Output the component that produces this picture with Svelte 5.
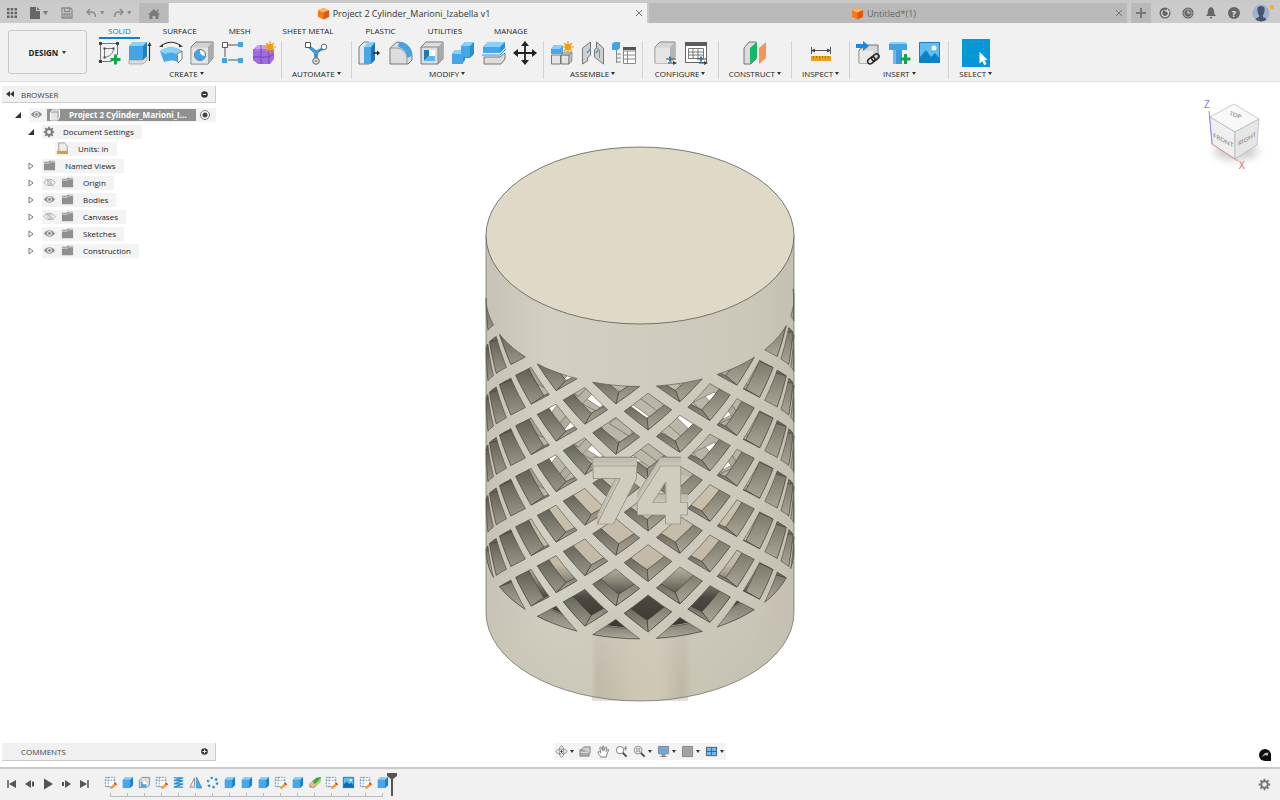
<script>
  // ---- Toolbar data -------------------------------------------------------
  const ribbonTabs = ['SOLID', 'SURFACE', 'MESH', 'SHEET METAL', 'PLASTIC', 'UTILITIES', 'MANAGE'];
  const groups = [
    { label: 'CREATE', icons: ['sketch', 'extrude', 'revolve', 'hole', 'pattern', 'form'] },
    { label: 'AUTOMATE', icons: ['automate'] },
    { label: 'MODIFY', icons: ['presspull', 'fillet', 'shell', 'combine', 'split', 'move'] },
    { label: 'ASSEMBLE', icons: ['component', 'joint', 'bom'] },
    { label: 'CONFIGURE', icons: ['configure', 'table'] },
    { label: 'CONSTRUCT', icons: ['plane'] },
    { label: 'INSPECT', icons: ['measure'] },
    { label: 'INSERT', icons: ['derive', 'fastener', 'image'] },
    { label: 'SELECT', icons: ['select'] }
  ];
  const tree = [
    { label: 'Named Views', kind: 'views' },
    { label: 'Origin', eye: 'off' },
    { label: 'Bodies', eye: 'on' },
    { label: 'Canvases', eye: 'off' },
    { label: 'Sketches', eye: 'on' },
    { label: 'Construction', eye: 'on' }
  ];
  const timeline = ['tSketch', 'tExtrude', 'tShell', 'tSketch', 'tCoil', 'tMirror', 'tPattern', 'tExtrude', 'tExtrude', 'tExtrude', 'tSketch', 'tExtrude', 'tPaint', 'tSketch', 'tImage', 'tSketch', 'tExtrude'];
  const transport = [
    ['Go to start', 'start'], ['Step back', 'back'], ['Play', 'play'], ['Step forward', 'forward'], ['Go to end', 'end']
  ];
  const navTools = [
    ['Orbit', 'orbit', true], ['Look at', 'look', false], ['Pan', 'hand', false], ['Zoom', 'zoom', false],
    ['Fit', 'fit', true], ['Display settings', 'monitor', true], ['Grid and snaps', 'square', true], ['Viewports', 'grid', true]
  ];

  const art = {
    sketch: '<path d="M2 2.500h19M3.500 1v21M1.500 20.500h13M20.500 2v12" stroke="#777" fill="none"/><path d="M2 1h3v3H2zM19 1h3v3h-3zM2 19h3v3H2z" fill="#444"/><path d="M7.500 7.500h9c0 5-4 8-9 9z" stroke="#777" fill="none"/><path d="M6.500 6.500h2v2h-2zM15.500 6.500h2v2h-2zM6.500 15.500h2v2h-2z" fill="#444"/><path d="M18.500 13.500v10M13.500 18.500h10" stroke="#16a34a" stroke-width="3"/>',
    extrude: '<path d="M1 5l4-4h14v18l-4 4H1z" fill="#9b9b9b"/><path d="M1 5h14v14H1z" fill="#42a5e6"/><path d="M1 5l4-4h14l-4 4z" fill="#8bd0f7"/><path d="M15 5l4-4v14l-4 4z" fill="#1e80c4"/><path d="M1 19h14l4-4v4l-4 4H1z" fill="#ddd" stroke="#888" stroke-width=".6"/><path d="M21.500 20V4" stroke="#333" stroke-width="1.200"/><path d="M21.500 1l2 4h-4z" fill="#333"/>',
    revolve: '<path d="M2 5c6-5 14-5 20 0" stroke="#333" stroke-width="1.200" fill="none"/><path d="M0 6l4-3v3zM24 6l-4-3v3z" fill="#333"/><path d="M1 10c7-5 15-5 22 0l-4 11c-4-2-9-2-14 0z" fill="#49a8e8"/><path d="M1 10c7-5 15-5 22 0l-5 3c-4-2-8-2-12 0z" fill="#8bd0f7"/><path d="M18 13l5-3v8l-4 4z" fill="#fff" stroke="#777"/>',
    hole: '<path d="M1 6l5-5h17v16l-5 6H1z" fill="#d0d0d0" stroke="#777"/><path d="M1.500 6.500H18v16H1.500z" fill="#e3e3e3"/><path d="M18 6l5-5v16l-5 6z" fill="#aaa"/><circle cx="10" cy="14" r="5.500" fill="#fff" stroke="#666"/><path d="M10 8.500a5.500 5.500 0 1 0 5.500 6c-3 1-6-1-5.500-6z" fill="#40a4e6"/>',
    pattern: '<path d="M7 4h10M7 19h10M4 7v9" stroke="#555" fill="none"/><path d="M1.500 1.500h5v5h-5z" fill="#fff" stroke="#555"/><path d="M17 1h5v5h-5zM1 17h5v5H1zM17 17h5v5h-5z" fill="#40a4e6"/>',
    form: '<path d="M6 4h11l5 4v10l-4 5H6l-5-4V9z" fill="#a06be0"/><path d="M6 4h11l2 3-3 3H1.500z" fill="#c9a3f5"/><path d="M1 9h16v14M9 4v19M1 16h16l5-3" stroke="#6d3bb0" stroke-width=".8" fill="none"/><circle cx="18" cy="6" r="3.200" fill="#f59e0b"/><path d="M18 0v12M12 6h12M14 2l8 8M22 2l-8 8" stroke="#f59e0b" stroke-width="1.200"/>',
    automate: '<path d="M4 5l8 6 8-4M12 11v8" stroke="#3d9bdc" stroke-width="3" fill="none"/><path d="M6 8c5 3 5 6 5 10M18 8c-5 3-5 6-5 10" stroke="#2c7eb8" fill="none"/><path d="M1.500 1.500h5v5h-5z" fill="#fff" stroke="#555"/><circle cx="20" cy="6" r="2.800" fill="#fff" stroke="#666"/><circle cx="12" cy="20" r="3.300" fill="#ddd" stroke="#666"/><circle cx="12" cy="20" r="1" fill="#777"/>',
    presspull: '<path d="M1 6l5-5h5v22H1z" fill="#e8e8e8" stroke="#777"/><path d="M6 6l4-5h7l-4 5z" fill="#8bd0f7"/><path d="M6 6h7v17H6z" fill="#46a6e7"/><path d="M13 6l4-5v18l-4 4z" fill="#1b78b8"/><path d="M15 12h5" stroke="#222" stroke-width="1.500"/><path d="M19 9.500l3 2.500-3 2.500z" fill="#222"/>',
    fillet: '<path d="M1 7l7-6c9 0 15 6 15 14v4l-4 4H1z" fill="#ddd" stroke="#777"/><path d="M10 1c8 0 13 6 13 14l-5 2c0-6-4-10-9-11z" fill="#42a5e6"/><path d="M1 7h7c6 1 10 5 10 10v6" fill="none" stroke="#999"/>',
    shell: '<path d="M1 6l5-5h17v17l-5 5H1z" fill="#ddd" stroke="#777"/><path d="M18 6l5-5v17l-5 5z" fill="#aaa"/><path d="M1 6h17v17" stroke="#888" fill="none"/><path d="M4 9h11v11H4z" fill="#fff"/><path d="M4 9l5 0v6l-5 5z" fill="#1c7ab9"/><path d="M9 15h6v5H4z" fill="#58b4ee"/>',
    combine: '<path d="M1 13l3-4h6V5l4-4h9v12l-4 4h-5v2l-3 4H1z" fill="#2a8ed1"/><path d="M1 13h9V5h9v11h-7v7H1z" fill="#46a6e7"/><path d="M1 13l3-4h6v4zM10 5l4-4h9l-4 4z" fill="#8bd0f7"/>',
    split: '<path d="M1 6l5-5h17v6l-5 5H1z" fill="#2a8ed1"/><path d="M1 6h17v6H1z" fill="#46a6e7"/><path d="M1 6l5-5h17l-5 5z" fill="#8bd0f7"/><path d="M0 14h18l6-6" stroke="#2a8ed1" fill="none"/><path d="M2 16h16l5-4v6l-4 5H2z" fill="#ddd" stroke="#777"/>',
    move: '<path d="M12 3v18M3 12h18" stroke="#222" stroke-width="1.800"/><path d="M12 0l4 5H8zM12 24l4-5H8zM0 12l5-4v8zM24 12l-5-4v8z" fill="#222"/>',
    component: '<path d="M1 8l3-4h9v9H1z" fill="#46a6e7"/><path d="M1 8l3-4h9l-3 4z" fill="#8bd0f7"/><path d="M1.500 14h9v9h-9zM11 14h8v9h-8z" fill="#e3e3e3" stroke="#777"/><path d="M11 14l3-3h8l-3 3zM19 14l3-3v9l-3 3z" fill="#bbb" stroke="#777" stroke-width=".6"/><circle cx="18" cy="6" r="3.300" fill="#f59e0b"/><path d="M18 0v12M12 6h12M14 2l8 8M22 2l-8 8" stroke="#f59e0b" stroke-width="1.200"/>',
    joint: '<path d="M1.500 7l8-6v13l-3 3v3l-5 3z" fill="#cfcfcf" stroke="#777"/><path d="M22.500 7l-7-6v6l-2 2v7l5 4 4 3z" fill="#cfcfcf" stroke="#777"/><path d="M15.500 7l3 2v8" fill="none" stroke="#888"/><path d="M6 12l3.500-4M15 12l2-3" stroke="#42a5e6" stroke-width="1.500"/>',
    bom: '<path d="M0 3l2-2h6v6L6 9H0z" fill="#42a5e6"/><path d="M4.500 9v13M4.500 13H9M4.500 17H9M4.500 21H9" stroke="#888" fill="none"/><path d="M11.500 6.500h12v16h-12zM11.500 14h12M11.500 18h12M15.500 10v12M11.500 10h12" fill="#fff" stroke="#888"/><path d="M11 6h13v3H11z" fill="#555"/>',
    configure: '<path d="M2 6l5-5h15v15l-5 6H2z" fill="#d5d5d5" stroke="#888"/><path d="M2.500 6.500H17V22H2.500z" fill="#e5e5e5"/><path d="M17 6l5-5v15l-5 6z" fill="#b5b5b5"/><path d="M13 18h10M15 22h8" stroke="#444"/><path d="M17 15.500v5" stroke="#1e80c4" stroke-width="2"/><path d="M20 20l4 2-4 2z" fill="#444"/>',
    table: '<path d="M1.500 1.500h21v20h-21z" fill="#fff" stroke="#666"/><path d="M1 1h22v4H1z" fill="#5d5d5d"/><path d="M4.500 7.500h15v10h-15zM4.500 11h15M4.500 14h15M9 7.500v10M14 7.500v10" fill="none" stroke="#777"/><path d="M13 18h10M15 22h8" stroke="#444"/><path d="M17 15.500v5" stroke="#1e80c4" stroke-width="2"/><path d="M20 20l4 2-4 2z" fill="#444"/>',
    plane: '<path d="M1 7l5-6h7v17l-5 5H1z" fill="#ddd" stroke="#777"/><path d="M7 7l7-6v16l-7 6z" fill="#14b866"/><path d="M16 7l7-6v16l-7 6z" fill="#f4935d"/>',
    measure: '<path d="M2.500 6v7M21.500 6v7M3 9.500h18" stroke="#555"/><path d="M2 9.500l4-2v4zM22 9.500l-4-2v4z" fill="#444"/><path d="M2 15h20v5H2z" fill="#eda11f"/><path d="M4.500 15v2.500M7.500 15v2M10.500 15v2.500M13.500 15v2M16.500 15v2.500M19.500 15v2" stroke="#b57400"/>',
    derive: '<path d="M3 9l6-5h13v12l-5 6H3z" fill="#d5d5d5" stroke="#777"/><path d="M3.500 9.500H17V22H3.500z" fill="#e9e9e9"/><path d="M0 3h7V0l6 5-6 5V7H0z" fill="#168be0"/><rect x="11" y="17" width="8" height="5" rx="2.500" transform="rotate(-40 15 19)" fill="none" stroke="#222" stroke-width="1.500"/><rect x="15" y="14" width="8" height="5" rx="2.500" transform="rotate(-40 19 16)" fill="none" stroke="#222" stroke-width="1.500"/>',
    fastener: '<path d="M2 3l2-2h14l2 2v6H2z" fill="#42a5e6"/><path d="M2 3l2-2h14l2 2z" fill="#8bd0f7"/><path d="M6 9h9v14H6z" fill="#3c9bdb"/><path d="M6 9h3v14H6z" fill="#6abcf0"/><path d="M18.500 13v10M13.500 18h10" stroke="#16a34a" stroke-width="3"/>',
    image: '<path d="M1 1h21v21H1z" fill="#60bdf3"/><path d="M1.500 1.500h20v20h-20z" fill="none" stroke="#1e80c4"/><path d="M2 16l6-7 5 7 4-4 5 6v4H2z" fill="#0b83c5"/><circle cx="16" cy="7" r="2.500" fill="#fff8e0"/>',
    select: '<path d="M0 0h24v24H0z" fill="#0696d7"/><path d="M2.500 2.500h16v12h-16z" fill="none" stroke="#2fb37c" stroke-width=".8" stroke-dasharray="2 1.500"/><path d="M15 11v10l2.500-2 1.500 3.500 2-1-1.500-3.500h2.500z" fill="#fff"/>',
    tSketch: '<path d="M1.500 1.500h10v10h-10zM1 4.500h11M4.500 1v11" fill="#fff" stroke="#6f8fa6" stroke-dasharray="2 1"/><path d="M7 12l5-5 1.800 1.800-5 5-2 .2z" fill="#f29a2e"/><path d="M11.500 7.500l2 2" stroke="#d33" stroke-width="1.500"/>',
    tExtrude: '<path d="M2 4l3-3h8v9l-3 3H2z" fill="#1e80c4"/><path d="M2 4h8v9H2z" fill="#46a6e7"/><path d="M2 4l3-3h8l-3 3z" fill="#8bd0f7"/>',
    tShell: '<path d="M1.500 4.500l3-3h8v8l-3 3h-8z" fill="#ddd" stroke="#888"/><path d="M3 6h6v6H3z" fill="#fff"/><path d="M3 6h2v3h4v3H3z" fill="#46a6e7"/>',
    tCoil: '<path d="M2 2h10L2 5h10L2 8.500h10L2 12h10" stroke="#2a8ed1" stroke-width="1.500" fill="none"/>',
    tMirror: '<path d="M6 2v10H1z" fill="#eee" stroke="#888"/><path d="M8 1v12h6z" fill="#46a6e7" stroke="#2a7fb8" stroke-width=".6"/>',
    tPattern: '<circle cx="7" cy="7" r="5" fill="none" stroke="#2a8ed1" stroke-width="2.500" stroke-dasharray="2.400 2.830"/>',
    tPaint: '<path d="M1 9l8-7 5-1-1 5-7 7-4-1z" fill="#36a852"/><path d="M7 9l6-6 1 3-7 7z" fill="#a4d65e"/><path d="M1 9l4 4 3-3-3-4z" fill="#f3b48b"/>',
    tImage: '<path d="M1 1h12v12H1z" fill="#60bdf3"/><path d="M1 10l4-4 3 3 2-2 3 4v2H1z" fill="#0b6fae"/><path d="M1.500 1.500h11v11h-11z" fill="none" stroke="#1e80c4"/><circle cx="9.500" cy="4.500" r="1.200" fill="#fff"/>',
    start: '<path d="M3 3v8" stroke="#555" stroke-width="1.500"/><path d="M11 3v8L4 7z" fill="#555"/>',
    back: '<path d="M8 3v8L2 7z" fill="#555"/><path d="M10 4.500v5" stroke="#555" stroke-width="2"/>',
    play: '<path d="M3 1.500v11L12 7z" fill="#555"/>',
    forward: '<path d="M6 3v8l6-4z" fill="#555"/><path d="M4 5v4" stroke="#555" stroke-width="2"/>',
    end: '<path d="M3 3v8l7-4z" fill="#555"/><path d="M11 3v8" stroke="#555" stroke-width="1.500"/>',
    orbit: '<ellipse cx="7" cy="7" rx="6" ry="2.500" fill="none" stroke="#888"/><ellipse cx="7" cy="7" rx="2.500" ry="6" fill="none" stroke="#888"/><path d="M7 5.500v3M5.500 7h3" stroke="#555"/>',
    look: '<path d="M1 5h10v7H1z" fill="#aaa" stroke="#888"/><path d="M3 4l2-2h7v7" fill="#ccc" stroke="#888"/><path d="M2 8h8" stroke="#ddd"/>',
    hand: '<path d="M4 13C3 11 1 9 1 7.500c1-1 2 0 3 1L3 3c0-1 1.500-1 1.800 0L6 6V2c0-1 1.500-1 1.500 0v4L9 2.500c.5-1 1.700-.5 1.500.5l-.7 4 1.700-2c.8-.6 1.500 0 1 1L10.500 10 10 13z" fill="#fff" stroke="#777"/>',
    zoom: '<circle cx="5.500" cy="5.500" r="4" fill="#fff" stroke="#777"/><path d="M8.500 8.500l4 4" stroke="#444" stroke-width="2"/><path d="M11.500 1v5M10 3.500h3" stroke="#777"/>',
    fit: '<circle cx="5.500" cy="5.500" r="4.200" fill="#fff" stroke="#888"/><path d="M3.500 3.500h4v4h-4z" fill="#ccc" stroke="#888" stroke-width=".7"/><path d="M8.500 8.500l4 4" stroke="#444" stroke-width="2"/>',
    monitor: '<path d="M1.500 1.500h11v8h-11z" fill="#6fa8dc" stroke="#888"/><path d="M5 10h4v2h2v1H3v-1h2z" fill="#888"/>',
    square: '<path d="M1.500 1.500h11v11h-11z" fill="#a2a2a2" stroke="#888"/>',
    grid: '<path d="M1 2h12v10H1z" fill="#42658a"/><path d="M2 3h4.500v3.500H2zM7.500 3H12v3.500H7.500zM2 7.500h4.500V11H2zM7.500 7.500H12V11H7.500z" fill="#7db4e6"/>',
    cube: '<path d="M7 1l6 2.500v7L7 13.500l-6-3v-7z" fill="#f47a20"/><path d="M7 1l6 2.500L7 6 1 3.500z" fill="#ffb26b"/><path d="M7 6l6-2.500v7L7 13.500z" fill="#dd5a10"/>',
    gear: '<path d="M7 .8v12.400M.8 7h12.400M2.600 2.600l8.800 8.800M11.400 2.600l-8.800 8.800" stroke="#777" stroke-width="2"/><circle cx="7" cy="7" r="4.500" fill="#777"/><circle cx="7" cy="7" r="2.400" fill="#f2f2f2"/>',
    folder: '<path d="M1 3h5l1-1h6v10H1z" fill="#8f8f8f"/><path d="M1 4.500h6L8.500 3H13" stroke="#ddd" fill="none"/>',
    on: '<path d="M1 7c3-4.500 9-4.500 12 0-3 4.500-9 4.500-12 0z" fill="#929292"/><circle cx="7" cy="7" r="2.600" fill="#f2f2f2"/><circle cx="7" cy="7" r="1.500" fill="#888"/>',
    off: '<path d="M1 7c3-4.500 9-4.500 12 0-3 4.500-9 4.500-12 0z" fill="none" stroke="#aaa"/><circle cx="7" cy="7" r="2" fill="none" stroke="#aaa"/><path d="M2.500 3l9 8" stroke="#aaa"/>',
    units: '<path d="M3 1h6l3 3v7H3z" fill="#eee" stroke="#999"/><path d="M1 9.500h12v3.500H1z" fill="#d9a039"/>',
    body: '<path d="M2.500 4.500l2-2.500h7v7l-2 3h-7z" fill="#bbb" stroke="#fff"/><path d="M3 5h6v6.500H3z" fill="#e4e4e4"/>'
  };

  // ---- Lattice cylinder, orthographic projection --------------------------
  const CX = 640, TOP = 235.5, OUTER = 154, INNER = 136, TILT = 0.575;
  const rad = Math.PI / 180;
  const project = (r, deg, h) => [CX + r * Math.sin(deg * rad), TOP + TILT * r * Math.cos(deg * rad) + h];
  const toPath = (pts) => 'M' + pts.map((p) => p[0].toFixed(1) + ' ' + p[1].toFixed(1)).join('L') + 'Z';
  const area = (pts) => pts.reduce((s, p, i) => {
    const q = pts[(i + 1) % pts.length];
    return s + p[0] * q[1] - q[0] * p[1];
  }, 0);

  // Each cut keeps a constant width through the wall, so its angle grows inwards.
  function makeHole(deg, row, near, far) {
    const h = 62.4 + 25.25 * row;
    const c = { L: [-8.9, 0], T: [0, -18.5], R: [8.9, 0], B: [0, 18.5] };
    const order = row === 0 ? 'LRB' : row === 10 ? 'LTR' : 'LTRB';
    const tall = (r) => (r === OUTER ? 1 : 0.92);
    const rim = [];
    const walls = [];
    for (let i = 0; i < order.length; i++) {
      const a = order[i], b = order[(i + 1) % order.length];
      const front = [], back = [];
      for (let s = 0; s <= 5; s++) {
        const d = c[a][0] + ((c[b][0] - c[a][0]) * s) / 5;
        const y = c[a][1] + ((c[b][1] - c[a][1]) * s) / 5;
        front.push(project(near, deg + (d * OUTER) / near, h + y * tall(near)));
        back.push(project(far, deg + (d * OUTER) / far, h + y * tall(far)));
      }
      rim.push(...front.slice(0, 5));
      walls.push({ key: a + b, pts: [...front, ...back.reverse()] });
    }
    const sign = Math.sign(area(rim));
    return {
      id: (near > far ? 'f' : 'b') + Math.round(deg) + '-' + row,
      rim: toPath(rim),
      walls: walls.filter((w) => area(w.pts) * sign > 0).map((w) => ({ d: toPath(w.pts), key: w.key }))
    };
  }

  const tones = {
    LT: ['#4b4941', '#77746a'], TR: ['#5d5a50', '#7c796d'], RB: ['#7b7869', '#a9a697'],
    BL: ['#615e53', '#99968a'], LR: ['#615f55', '#615f55'], RL: ['#7b786c', '#aeab9d']
  };

  const frontHoles = [], backHoles = [];
  for (let k = -15; k < 15; k++) {
    const deg = 3 + 12 * k;
    const isFront = Math.abs(deg) < 90;
    for (let row = 0; row <= 10; row++) {
      if (Math.abs((row + k) % 2) === 1) {
        if (isFront) frontHoles.push(makeHole(deg, row, OUTER, INNER));
        else backHoles.push(makeHole(deg, row, INNER, OUTER));
      }
    }
  }
</script>

{#snippet icon(name, size)}
  <svg width={size} height={size} viewBox={size >= 24 ? '0 0 24 24' : '0 0 14 14'} aria-hidden="true">{@html art[name]}</svg>
{/snippet}

<div class="app">
  <header class="titlebar">
    <div class="quick">
      <button aria-label="Data panel"><svg width="12" height="12" viewBox="0 0 12 12"><path d="M1 1h2.500v2.500H1zM4.700 1h2.500v2.500H4.700zM8.500 1H11v2.500H8.500zM1 4.700h2.500v2.500H1zM4.700 4.700h2.500v2.500H4.700zM8.500 4.700H11v2.500H8.500zM1 8.500h2.500V11H1zM4.700 8.500h2.500V11H4.700zM8.500 8.500H11V11H8.500z" fill="#666" /></svg></button>
      <button class="file" aria-label="File"><svg width="20" height="12" viewBox="0 0 20 12"><path d="M1 0h6v4h4v8H1zM8 0l3 3H8z" fill="#666" /><path d="M14 4h5l-2.500 4z" fill="#777" /></svg></button>
      <button class="save" aria-label="Save"><svg width="12" height="12" viewBox="0 0 12 12"><path d="M1 1h8.500L11 2.500V11H1zM3.500 1v3.500h5V1M3 11V7h6v4M4.500 9h3" fill="none" stroke="#8a8a8a" stroke-width="1.300" /></svg></button>
      <button class="undo" aria-label="Undo"><svg width="20" height="12" viewBox="0 0 20 12"><path d="M5 2L2 5l3 3M2 5h4c3 0 4.500 2 4.500 5" fill="none" stroke="#8c8c8c" stroke-width="1.500" /><path d="M15 4h4.500l-2.200 3.500z" fill="#8c8c8c" /></svg></button>
      <button aria-label="Redo"><svg width="20" height="12" viewBox="0 0 20 12"><path d="M7 2l3 3-3 3M10 5H6c-3 0-4.500 2-4.500 5" fill="none" stroke="#8c8c8c" stroke-width="1.500" /><path d="M14 4h4.500l-2.200 3.500z" fill="#8c8c8c" /></svg></button>
    </div>
    <button class="home" aria-label="Home"><svg width="12" height="12" viewBox="0 0 12 12"><path d="M6 1l6 5.500h-1.500V11h-3V8h-3v3h-3V6.500H0zM9 1.500h1.500V4L9 3z" fill="#7a7a7a" /></svg></button>
    <div class="doc active"><span class="doc-title">{@render icon('cube', 13)}Project 2 Cylinder_Marioni_Izabella v1</span><button aria-label="Close tab"><svg width="8" height="8" viewBox="0 0 8 8"><path d="M1 1l6 6M7 1L1 7" stroke="#777" /></svg></button></div>
    <div class="doc"><span class="doc-title">{@render icon('cube', 13)}Untitled*(1)</span><button aria-label="Close tab"><svg width="8" height="8" viewBox="0 0 8 8"><path d="M1 1l6 6M7 1L1 7" stroke="#777" /></svg></button></div>
    <button class="plus" aria-label="New tab"><svg width="10" height="10" viewBox="0 0 10 10"><path d="M5 0v10M0 5h10" stroke="#777" stroke-width="2" /></svg></button>
    <div class="account">
      <button aria-label="Extensions"><svg width="12" height="12" viewBox="0 0 12 12"><circle cx="6" cy="6" r="5.500" fill="#666" /><path d="M4 3.500a3.400 3.400 0 1 0 4.500.3M5.500 3l2 1.500M8.500 2v2.500h2" fill="none" stroke="#ddd" stroke-width="1.300" /></svg></button>
      <button aria-label="Job status"><svg width="12" height="12" viewBox="0 0 12 12"><circle cx="6" cy="6" r="5.500" fill="#666" /><circle cx="6" cy="6" r="4" fill="none" stroke="#bbb" stroke-width=".7" /><path d="M6 3.500V6h2.500" fill="none" stroke="#ddd" stroke-width="1.200" /></svg></button>
      <button aria-label="Notifications"><svg width="12" height="12" viewBox="0 0 12 12"><path d="M6 0c3 1 3 4 3.500 7L11 9H1l1.500-2C3 4 3 1 6 0zM4.500 10h3L6 12z" fill="#666" /></svg></button>
      <button class="help" aria-label="Help"><span>?</span></button>
      <button class="avatar" aria-label="Account"><svg width="22" height="18" viewBox="0 0 22 18"><circle cx="9" cy="9" r="8.500" fill="#9fb3cd" /><path d="M9 2c3 0 4 2 3.500 5 0 2-1 3-1.500 4v2c2 .5 3 1.500 3.500 2.500a8.500 8.500 0 0 1-11 0C4 14.500 5 13.500 7 13v-2C6 10 5.500 9 5.500 7 5 4 6 2 9 2z" fill="#47566e" /><path d="M18 1h4v4h-4z" fill="#f4ae3d" /></svg></button>
    </div>
  </header>

  <section class="ribbon">
    <button class="workspace">DESIGN <i></i></button>
    <div class="ribbon-main">
      <nav>
        {#each ribbonTabs as tab, i}
          <button class:current={i === 0}>{tab}</button>
        {/each}
      </nav>
      <div class="groups">
        {#each groups as group}
          <div class="group" class:wide={group.icons.length > 2}>
            <div class="icons">
              {#each group.icons as name}
                <button aria-label={group.label + ' ' + name}>{@render icon(name, name === 'select' ? 28 : 24)}</button>
              {/each}
            </div>
            <button class="group-label">{group.label}<i></i></button>
          </div>
        {/each}
      </div>
    </div>
  </section>

  <main>
    <svg class="model" width="320" height="570" viewBox="480 140 320 570" role="img" aria-label="Cylinder with diamond lattice">
      <defs>
        <linearGradient id="side" x1="486" x2="794" y1="0" y2="0" gradientUnits="userSpaceOnUse">
          <stop offset="0" stop-color="#c6c3b6" /><stop offset=".2" stop-color="#d2cfc3" /><stop offset=".5" stop-color="#d0ccbf" /><stop offset=".85" stop-color="#cbc7b9" /><stop offset="1" stop-color="#c3bfb1" />
        </linearGradient>
        <linearGradient id="lower" x1="486" x2="794" y1="0" y2="0" gradientUnits="userSpaceOnUse">
          <stop offset="0" stop-color="#c9c6b6" /><stop offset=".34" stop-color="#cdc9b9" /><stop offset=".36" stop-color="#beb9a8" /><stop offset=".48" stop-color="#ccc6b4" /><stop offset=".56" stop-color="#cec8b6" /><stop offset=".64" stop-color="#bdb8a7" /><stop offset=".67" stop-color="#c9c5b5" /><stop offset="1" stop-color="#c3bfb1" />
        </linearGradient>
        <linearGradient id="fade" x1="0" x2="0" y1="600" y2="690" gradientUnits="userSpaceOnUse">
          <stop offset="0" stop-color="#fff" stop-opacity="0" /><stop offset=".7" stop-color="#fff" stop-opacity=".8" /><stop offset="1" stop-color="#fff" />
        </linearGradient>
        <mask id="lowerMask" maskUnits="userSpaceOnUse" x="480" y="540" width="320" height="170"><path d="M480 540h320v170H480z" fill="url(#fade)" /></mask>
        <linearGradient id="floor" x1="0" x2="0" y1="476" y2="623" gradientUnits="userSpaceOnUse">
          <stop offset="0" stop-color="#cac2ad" /><stop offset=".6" stop-color="#c2baa6" /><stop offset=".68" stop-color="#9b9686" /><stop offset=".75" stop-color="#747064" /><stop offset=".83" stop-color="#4a4840" /><stop offset="1" stop-color="#3c3a33" />
        </linearGradient>
        <linearGradient id="inside" x1="512" x2="768" y1="0" y2="0" gradientUnits="userSpaceOnUse">
          <stop offset="0" stop-color="#9b988a" /><stop offset=".3" stop-color="#b9b5a6" /><stop offset=".7" stop-color="#c0bcac" /><stop offset="1" stop-color="#a19d8e" />
        </linearGradient>
        {#each Object.entries(tones) as [key, [from, to]]}
          <linearGradient id={'wall' + key} x1="0" x2="0" y1="0" y2="1"><stop offset="0" stop-color={from} /><stop offset="1" stop-color={to} /></linearGradient>
        {/each}
        <clipPath id="openings"><path d={frontHoles.map((h) => h.rim).join('')} /></clipPath>
        {#each [...frontHoles, ...backHoles] as hole}
          <clipPath id={hole.id}><path d={hole.rim} /></clipPath>
        {/each}
      </defs>

      <path d="M592 696h96v5h-96z" fill="#e2e0db" />
      <path d="M486 235.500V612.500A154 88.500 0 0 0 794 612.500V235.500z" fill="url(#side)" />
      <path d="M486 540V612.500A154 88.500 0 0 0 794 612.500V540z" fill="url(#lower)" mask="url(#lowerMask)" />

      <g clip-path="url(#openings)">
        <path d="M486 200h308v460H486z" fill="url(#inside)" />
        {#each backHoles as hole}
          <g clip-path="url(#{hole.id})">
            <path d={hole.rim} fill="#fff" />
            {#each hole.walls as wall}<path d={wall.d} fill="#bab6a7" stroke="#66645a" stroke-width=".6" />{/each}
          </g>
          <path d={hole.rim} fill="none" stroke="#66645a" stroke-width=".6" />
        {/each}
        <ellipse cx="640" cy="549.500" rx="136" ry="78.200" fill="url(#floor)" />
      </g>
      {#each frontHoles as hole}
        <g clip-path="url(#{hole.id})">
          {#each hole.walls as wall}<path d={wall.d} fill="url(#wall{wall.key})" stroke="#45433b" stroke-width=".7" />{/each}
        </g>
        <path d={hole.rim} fill="none" stroke="#504e45" stroke-width=".6" />
      {/each}

      <path d="M486 235.500V612.500A154 88.500 0 0 0 794 612.500V235.500" fill="none" stroke="#6b695f" stroke-width=".7" />
      <ellipse cx="640" cy="235.500" rx="154" ry="88.500" fill="#dfd9c8" stroke="#5c5a52" stroke-width=".8" />
      <text class="number" x="591" y="524">74</text>
    </svg>

    <aside class="browser">
      <div class="panel-head">
        <svg width="8" height="6" viewBox="0 0 8 6"><path d="M4 0v6L0 3zM8 0v6L4 3z" fill="#333" /></svg>
        <span>BROWSER</span>
        <button aria-label="Collapse browser"><svg width="7" height="7" viewBox="0 0 7 7"><circle cx="3.500" cy="3.500" r="3.300" fill="#333" /><path d="M1.800 3.500h3.400" stroke="#eee" /></svg></button>
      </div>
      <ul>
        <li class="root">
          <svg class="twist" width="6" height="6" viewBox="0 0 6 6"><path d="M6 0v6H0z" fill="#333" /></svg>
          <div class="chip">{@render icon('on', 13)}<div class="picked">{@render icon('body', 14)}<b>Project 2 Cylinder_Marioni_I...</b></div><input type="radio" checked aria-label="Activate component" /></div>
        </li>
        <li><svg class="twist" width="6" height="6" viewBox="0 0 6 6"><path d="M6 0v6H0z" fill="#333" /></svg><div class="chip settings">{@render icon('gear', 12)}<span>Document Settings</span></div></li>
        <li class="units"><div class="chip">{@render icon('units', 13)}<span>Units: in</span></div></li>
        {#each tree as node}
          <li><svg class="twist" width="6" height="8" viewBox="0 0 6 8"><path d="M1 1l4 3-4 3z" fill="#fff" stroke="#777" /></svg>
            <div class="chip">{#if node.eye}{@render icon(node.eye, 13)}{/if}{@render icon('folder', 13)}<span>{node.label}</span></div></li>
        {/each}
      </ul>
    </aside>

    <svg class="viewcube" width="70" height="80" viewBox="1200 95 70 80" role="img" aria-label="View cube">
      <defs><filter id="soft" x="-30%" y="-50%" width="160%" height="200%"><feGaussianBlur stdDeviation="4" /></filter></defs>
      <ellipse cx="1236" cy="150" rx="22" ry="9" fill="#ccc" filter="url(#soft)" />
      <path d="M1234 103l25 15-24 13-25-15z" fill="#f8f8f8" stroke="#aaa" stroke-width=".6" />
      <path d="M1210 116l25 15v27l-23-15z" fill="#efefef" stroke="#aaa" stroke-width=".6" />
      <path d="M1259 118l-24 13v27l22-14z" fill="#e6e6e6" stroke="#aaa" stroke-width=".6" />
      <path d="M1209 110l3 33" stroke="#8a86ee" /><path d="M1212 143l26 17" stroke="#e58a96" />
      <g class="faces">
        <text transform="translate(1229 114) rotate(20)">TOP</text>
        <text transform="translate(1213 136) skewY(28)">FRONT</text>
        <text transform="translate(1238 145) skewY(-29)">RIGHT</text>
      </g>
      <text class="axis" x="1204" y="107" fill="#7a76ee">Z</text>
      <text class="axis" x="1239" y="168" fill="#f0545c">X</text>
    </svg>

    <div class="comments panel-head"><span>COMMENTS</span><button aria-label="Expand comments"><svg width="7" height="7" viewBox="0 0 7 7"><circle cx="3.500" cy="3.500" r="3.300" fill="#333" /><path d="M1.500 3.500h4M3.500 1.500v4" stroke="#eee" /></svg></button></div>

    <div class="navbar">
      {#each navTools as [label, name, menu]}
        <button aria-label={label}>{@render icon(name, 13)}{#if menu}<i></i>{/if}</button>
      {/each}
    </div>

    <button class="assistant" aria-label="Assistant"><svg width="12" height="12" viewBox="0 0 12 12"><path d="M6 0a6 6 0 0 1 6 6v6H6A6 6 0 0 1 6 0z" fill="#0c0c0c" /><path d="M2.500 8L6 4l3.500-.500L8.500 7 6.500 6z" fill="#bbb" /></svg></button>
  </main>

  <footer>
    <div class="transport">
      {#each transport as [label, name]}<button aria-label={label}>{@render icon(name, 14)}</button>{/each}
    </div>
    <div class="timeline">
      {#each timeline as name}<button aria-label={'Feature ' + name.slice(1)}>{@render icon(name, 13)}</button>{/each}
      <svg class="marker" width="10" height="24" viewBox="0 0 10 24"><path d="M0 1h10v3L6 7v17H4V7L0 4z" fill="#555" /></svg>
    </div>
    <button class="prefs" aria-label="Timeline settings">{@render icon('gear', 13)}</button>
  </footer>
</div>

<style>
  :global(body) { margin: 0; }
  .app { min-height: 100vh; display: flex; flex-direction: column; font-family: "Open Sans", "Noto Sans", sans-serif; font-size: 8px; color: #222; background: #fff; }
  button { border: 0; padding: 0; margin: 0; background: none; font: inherit; color: inherit; display: flex; align-items: center; justify-content: center; }
  svg { display: block; flex: none; }
  i { display: inline-block; border: 2px solid transparent; border-top: 3px solid #333; border-bottom: 0; margin-left: 2px; }

  .titlebar { display: flex; height: 20px; padding-top: 3px; background: #cbcbcb; box-shadow: inset 0 3px #c8c8c8; }
  .quick { width: 133px; padding-left: 6px; display: flex; align-items: center; }
  .quick .file { margin-left: 11px; }
  .quick .save { margin-left: 12px; }
  .quick .undo { margin-left: 12px; margin-right: 8px; }
  .home { width: 29px; background: #b9b9b9; margin-right: 1px; padding-top: 2px; }
  .doc { flex: 1; display: flex; align-items: center; background: #b9b9b9; color: #666; font-size: 9px; margin-right: 2px; padding-right: 4px; }
  .doc.active { background: #f1f1f1; color: #333; }
  .doc-title { flex: 1; display: flex; justify-content: center; align-items: center; gap: 3px; padding-left: 3px; }
  .plus { width: 20px; background: #b9b9b9; margin-left: 2px; }
  .account { width: 121px; padding-left: 8px; display: flex; align-items: center; gap: 11px; }
  .account .help { width: 12px; height: 12px; border-radius: 50%; background: #666; color: #eee; font-size: 9px; font-weight: 700; }
  .account .avatar { margin-left: 1px; }

  .ribbon { display: flex; height: 58px; background: #f1f1f1; border-bottom: 1px solid #ddd; }
  .workspace { width: 79px; height: 44px; margin: 7px 5px 0 8px; border: 1px solid #c9c9c9; border-radius: 3px; font-weight: 700; box-sizing: border-box; }
  .workspace i { margin-left: 4px; }
  nav { display: flex; gap: 14px; height: 16px; padding-left: 7px; }
  nav button { padding: 0 9px; border-bottom: 2px solid transparent; }
  nav .current { color: #0080cc; border-color: #0a84d0; }
  .groups { display: flex; }
  .group { height: 38px; padding: 0 10px; border-right: 1px solid #d2d2d2; display: flex; flex-direction: column; align-items: center; justify-content: space-between; margin-top: 2px; }
  .group.wide { padding: 0 6px; }
  .group.wide:first-child { padding: 0 5px; }
  .group:last-child { border: 0; }
  .icons { display: flex; gap: 7px; height: 24px; align-items: center; }
  .group-label { height: 11px; font-weight: 500; }

  main { position: relative; flex: 1; display: flex; align-items: center; justify-content: center; min-height: 600px; background: #fff; }
  .number { font-family: Inter, sans-serif; font-weight: 900; font-size: 80px; fill: #d0ccbe; stroke: #8a877b; stroke-width: 0.6px; filter: drop-shadow(0 -3px 0 #c9c5b7) drop-shadow(0 -5px 0 #c2beaf) drop-shadow(0 -1px 0 #8a877b); }

  .browser { position: absolute; left: 2px; top: 4px; width: 214px; }
  .panel-head { display: flex; align-items: center; height: 17px; background: #f0f0f0; border-right: 1px solid #ccc; border-bottom: 1px solid #ccc; box-sizing: border-box; padding: 0 7px 0 4px; color: #444; }
  .panel-head span { flex: 1; padding-left: 7px; }
  ul { list-style: none; margin: 0; padding: 3px 0 0; }
  li { display: flex; align-items: center; height: 17px; padding-left: 26px; }
  li.root { padding-left: 13px; }
  li.units { padding-left: 53px; }
  .twist { width: 6px; margin-right: 8px; }
  .chip { display: flex; align-items: center; height: 14px; padding: 0 8px 0 1px; gap: 5px; background: #f3f3f3; }
  .chip span { padding-left: 4px; }
  .chip.settings span { padding-left: 3px; }
  .root .chip { flex: 1; gap: 4px; padding: 0 4px 0 1px; }
  .picked { flex: 1; display: flex; align-items: center; gap: 7px; height: 12px; background: #909090; color: #fff; padding-left: 1px; white-space: nowrap; }
  input[type='radio'] { appearance: none; width: 10px; height: 10px; margin: 0 2px 0 0; border: 1px solid #777; border-radius: 50%; background: radial-gradient(#444 0 2px, #fff 3px); }

  .viewcube { position: absolute; right: 10px; top: 14px; }
  .faces { font-family: Lato, sans-serif; font-size: 6px; font-weight: 700; fill: #999; }
  .axis { font-size: 10px; }
  .comments { position: absolute; left: 2px; bottom: 6px; width: 214px; height: 18px; }
  .comments span { padding-left: 15px; }
  .navbar { position: absolute; bottom: 7px; display: flex; gap: 5px; height: 17px; align-items: center; background: #f3f3f3; padding: 0 2px 0 1px; }
  .assistant { position: absolute; right: 9px; bottom: 6px; }

  footer { height: 31px; border-top: 2px solid #cacaca; background: #f1f1f1; display: flex; align-items: center; }
  .transport { display: flex; gap: 4px; padding: 0 0 2px 5px; }
  .timeline { display: flex; flex: 1; padding-left: 11px; height: 26px; }
  .timeline button { position: relative; width: 17px; padding-bottom: 4px; }
  .timeline button::before { content: ''; position: absolute; left: 0; right: 0; bottom: 1px; border-bottom: 1px solid #bbb; }
  .timeline button:first-child::before { left: 8px; }
  .timeline button:last-of-type::before { right: 8px; }
  .timeline button::after { content: ''; position: absolute; left: 8px; bottom: 1px; height: 4px; border-left: 1px solid #bbb; }
  .marker { margin-left: -4px; }
  .prefs { padding-right: 9px; }
</style>
